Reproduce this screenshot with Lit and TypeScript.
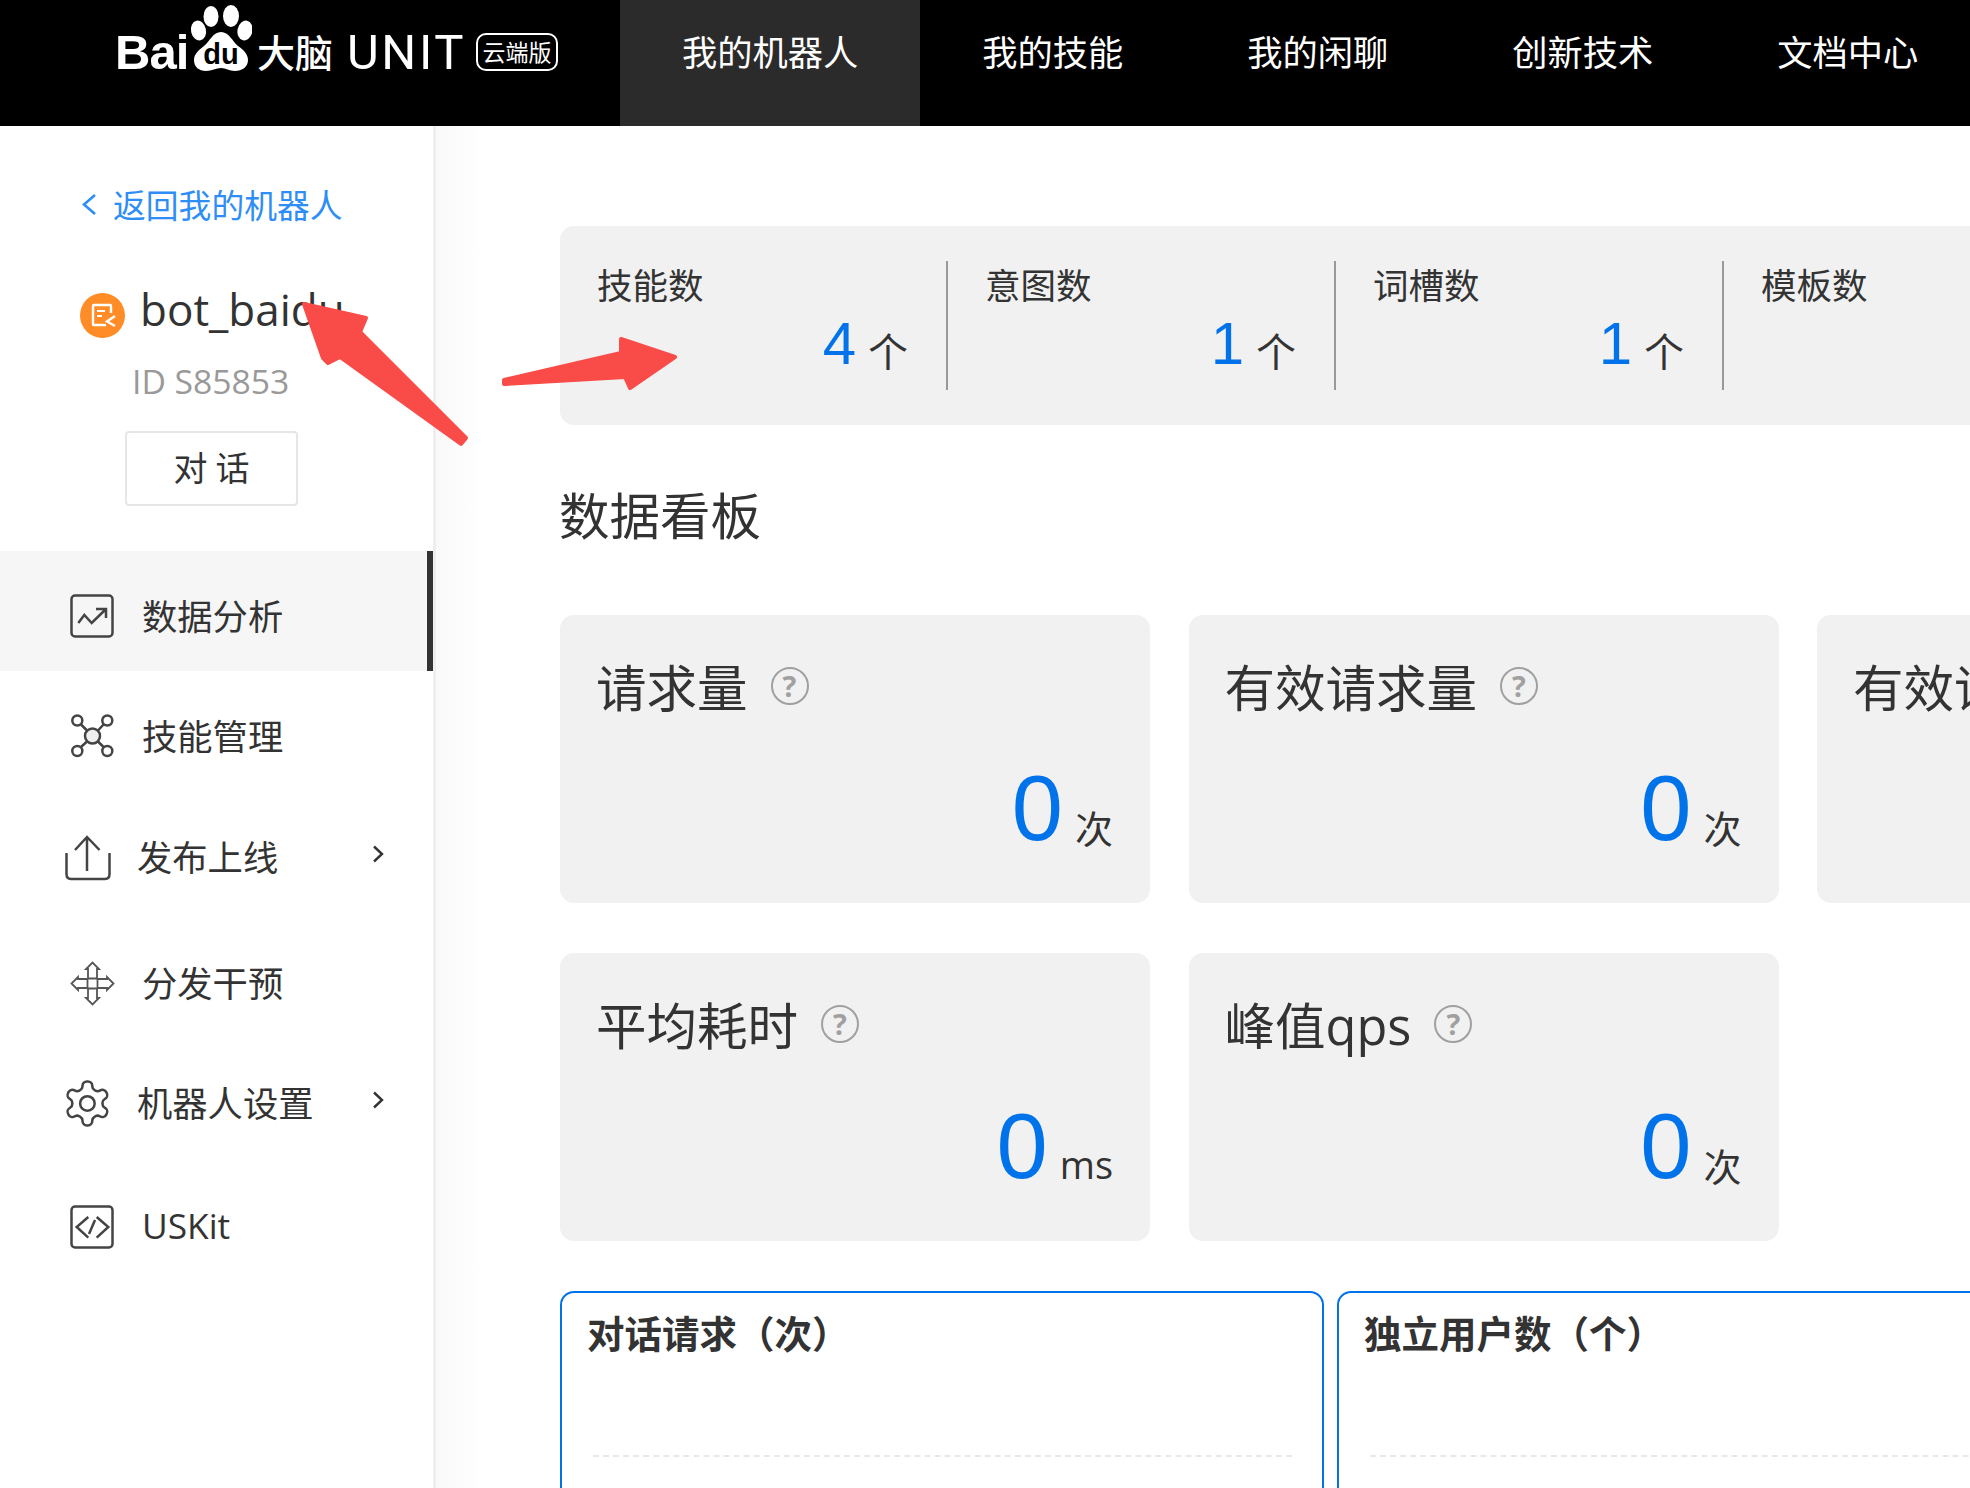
import { LitElement, html, css, svg, unsafeCSS } from "lit";
import { customElement } from "lit/decorators.js";

const FONT = unsafeCSS(`"Open Sans", "Noto Sans CJK SC", sans-serif`);

const chevron = html`<svg class="chev" viewBox="0 0 12 18" width="12" height="18" fill="none" stroke="#333" stroke-width="2.4"><path d="M2 1.5 L10 9 L2 16.5"/></svg>`;

const icons: Record<string, unknown> = {
  chart: svg`<rect x="1.5" y="1.5" width="41" height="41" rx="3.5"/><path d="M8.3 29 L14.3 21 L21.7 29 L36 15 M26 15 H36 V24"/>`,
  net: svg`<circle cx="22.5" cy="22" r="7.5" fill="#f0f0f0"/><circle cx="7.3" cy="6.5" r="5"/><circle cx="37.3" cy="6.5" r="5"/><circle cx="7.3" cy="37" r="5"/><circle cx="37.3" cy="37" r="5"/><path d="M11 10.5 L17 16.5 M33.5 10.5 L28 16.5 M11 33 L17 27.5 M33.5 33 L28 27.5"/>`,
  upload: svg`<path d="M22 2 V36 M10 15 L22 2 L34.5 15"/><path d="M1.5 18 V39 Q1.5 44 6 44 H40 Q44.5 44 44.5 39 V18"/>`,
  cross: svg`<g stroke-width="1.8" stroke="#555"><path d="M18 17.5 V8 H16 L22.5 1.5 L29 8 H27 V17.5 Z"/><path d="M18 27.5 V37 H16 L22.5 43.5 L29 37 H27 V27.5 Z"/><path d="M17.5 18 H8 V16 L1.5 22.5 L8 29 V27 H17.5 Z"/><path d="M27.5 18 H37 V16 L43.5 22.5 L37 29 V27 H27.5 Z"/></g>`,
  gear: svg`<g transform="translate(-4 -4) scale(2.2)" stroke-width="1.15"><path d="M12.22 2h-.44a2 2 0 0 0-2 2v.18a2 2 0 0 1-1 1.73l-.43.25a2 2 0 0 1-2 0l-.15-.08a2 2 0 0 0-2.73.73l-.22.38a2 2 0 0 0 .73 2.73l.15.1a2 2 0 0 1 1 1.72v.51a2 2 0 0 1-1 1.74l-.15.09a2 2 0 0 0-.73 2.73l.22.38a2 2 0 0 0 2.73.73l.15-.08a2 2 0 0 1 2 0l.43.25a2 2 0 0 1 1 1.73V20a2 2 0 0 0 2 2h.44a2 2 0 0 0 2-2v-.18a2 2 0 0 1 1-1.73l.43-.25a2 2 0 0 1 2 0l.15.08a2 2 0 0 0 2.73-.73l.22-.39a2 2 0 0 0-.73-2.73l-.15-.08a2 2 0 0 1-1-1.74v-.5a2 2 0 0 1 1-1.74l.15-.09a2 2 0 0 0 .73-2.73l-.22-.38a2 2 0 0 0-2.73-.73l-.15.08a2 2 0 0 1-2 0l-.43-.25a2 2 0 0 1-1-1.73V4a2 2 0 0 0-2-2z"/><circle cx="12" cy="12" r="3.3"/></g>`,
  code: svg`<rect x="1.5" y="1.5" width="41" height="41" rx="3.5"/><path d="M18.3 12 L6.7 22 L18.3 32.7 M26.7 12 L38.3 22 L26.7 32.7 M25 15 L19 29"/>`,
};

const menu = [
  { label: "数据分析", icon: "chart", active: true },
  { label: "技能管理", icon: "net" },
  { label: "发布上线", icon: "upload", sub: true },
  { label: "分发干预", icon: "cross" },
  { label: "机器人设置", icon: "gear", sub: true },
  { label: "USKit", icon: "code" },
];
const nav = ["我的机器人", "我的技能", "我的闲聊", "创新技术", "文档中心"];
const stats = [
  { t: "技能数", v: "4" },
  { t: "意图数", v: "1" },
  { t: "词槽数", v: "1" },
  { t: "模板数", v: "1" },
];
const cards = [
  { t: "请求量", v: "0", u: "次" },
  { t: "有效请求量", v: "0", u: "次" },
  { t: "有效请求占比", v: "0", u: "%" },
  { t: "平均耗时", v: "0", u: "ms", latin: true },
  { t: "峰值qps", v: "0", u: "次" },
];
const charts = ["对话请求（次）", "独立用户数（个）"];

@customElement("app-root")
export class AppRoot extends LitElement {
  static styles = css`
    :host { display: block; width: 1970px; height: 1488px; position: relative; overflow: hidden; background: #fff; font-family: ${FONT}; color: #333; }
    .header { display: flex; height: 126px; background: #000; color: #fff; }
    .logo { width: 620px; flex: none; display: flex; align-items: flex-start; padding: 0 0 0 115px; box-sizing: border-box; }
    .bai { font: 700 49px/1 "Liberation Sans", sans-serif; margin-top: 28px; letter-spacing: -1px; width: 73px; }
    .paw { position: relative; width: 64px; height: 72px; flex: none; }
    .paw svg { display: block; }
    .du { position: absolute; left: 8px; top: 40px; width: 50px; text-align: center; color: #000; font: 700 29px/1 "Liberation Sans", sans-serif; letter-spacing: 0; }
    .brain { font: 500 38px/1 "Noto Sans CJK SC", sans-serif; margin: 32px 0 0 5px; width: 76px; white-space: nowrap; }
    .unit { font: 400 49px/1 Roboto, sans-serif; margin: 28px 0 0 14px; letter-spacing: 2.6px; width: 116px; white-space: nowrap; }
    .edition { margin: 33px 0 0 13px; width: 82px; height: 38px; box-sizing: border-box; border: 2px solid #fff; border-radius: 10px; font: 400 23px/32px "Noto Sans CJK SC", sans-serif; text-align: center; white-space: nowrap; }
    .nav { display: flex; }
    .nav a { padding: 0 62px 25px; display: flex; align-items: center; font-size: 35.25px; white-space: nowrap; }
    .nav a.on { background: #2b2b2b; }

    .body { display: flex; height: 1362px; }
    .side { width: 436px; flex: none; box-sizing: border-box; border-right: 3px solid #eee; padding-top: 58px; }
    .back { display: flex; align-items: center; height: 40px; padding-left: 82px; color: #2e8ef5; font-size: 32.8px; white-space: nowrap; }
    .back svg { margin-right: 17px; }
    .bot { display: flex; align-items: center; height: 60px; padding-left: 80px; margin-top: 61px; }
    .bot-ic { width: 45px; height: 45px; flex: none; margin-right: 15px; }
    .bot-name { font-size: 44px; line-height: 60px; color: #333; margin-top: -12px; white-space: nowrap; }
    .bot-id { padding-left: 132px; font-size: 33.7px; line-height: 44px; color: #999; margin-top: 14px; }
    .talk { margin: 28px 0 0 125px; width: 173px; height: 75px; box-sizing: border-box; border: 2px solid #e6e6e6; border-radius: 4px; display: flex; align-items: center; justify-content: center; font-size: 34px; color: #333; letter-spacing: 8px; padding: 0 0 4px 8px; }
    .menu { margin-top: 45px; }
    .item { height: 120px; display: flex; align-items: center; padding: 10px 0 0 70px; font-size: 35.3px; box-sizing: border-box; position: relative; white-space: nowrap; }
    .item:nth-child(3) { margin-top: 1px; padding-left: 65px; }
    .item:nth-child(4) { margin-top: 6px; }
    .item:nth-child(5) { padding-left: 65px; }
    .item:nth-child(6) { margin-top: 4px; }
    .item.on { background: #f6f6f6; border-right: 6px solid #333; }
    .ic { flex: none; width: 45px; height: 45px; fill: none; stroke: #444; stroke-width: 2.5; overflow: visible; }
    .item span { margin: -4px 0 0 27px; }
    .chev { position: absolute; left: 372px; top: 53px; }

    .main { flex: 1; min-width: 0; padding: 100px 0 0 124px; background: linear-gradient(to right, #f9f9f9, #fff 50px); }
    .panel { display: flex; width: 1600px; height: 199px; box-sizing: border-box; padding: 35px 0; background: #f1f1f1; border-radius: 14px; }
    .cell { width: 388px; flex: none; box-sizing: border-box; padding: 0 38px 0 37px; border-right: 2px solid #999; display: flex; flex-direction: column; }
    .cell .t { font-size: 35.5px; line-height: 48px; }
    .cell .val { display: flex; justify-content: flex-end; align-items: baseline; }
    .num { font-family: "Liberation Sans", sans-serif; color: #0073eb; }
    .cell .num { font-size: 60px; line-height: 70px; }
    .cell .u { font-size: 40px; margin-left: 12px; transform: translateY(2.5px); }
    h2 { font-size: 50.5px; font-weight: 400; line-height: 70px; margin: 56px 0 0 -1px; }
    .grid { display: grid; grid-template-columns: repeat(3, 590px); gap: 50px 38.5px; margin-top: 64px; width: 1900px; }
    .card { height: 288px; background: #f1f1f1; border-radius: 14px; padding: 37px 37px 0 36px; box-sizing: border-box; }
    .card .t { display: flex; align-items: center; font-size: 50.5px; line-height: 72px; white-space: nowrap; }
    .help { width: 38px; height: 38px; box-sizing: border-box; border: 2px solid #a0a0a0; border-radius: 50%; color: #a0a0a0; font: 700 29px/33px "Open Sans", sans-serif; text-align: center; margin: -4px 0 0 23px; flex: none; }
    .card .val { display: flex; justify-content: flex-end; align-items: baseline; margin-top: 29px; }
    .card .num { font-size: 92px; line-height: 110px; }
    .card .u { font-size: 38px; margin-left: 12px; transform: translateY(3px); }
    .card .u.latin { transform: translateY(1px); }
    .charts { display: flex; gap: 13px; margin-top: 50px; width: 1700px; }
    .chart { width: 764px; height: 260px; flex: none; box-sizing: border-box; border: 2px solid #0073eb; border-radius: 14px 14px 0 0; padding: 18px 25px 0; }
    .chart b { display: block; font-size: 37.5px; line-height: 46px; font-weight: 700; white-space: nowrap; }
    .dash { height: 0; margin: 98px 5px 0 6px; border-top: 2px dashed #e8e8e8; }
    .arrows { position: absolute; inset: 0; width: 1970px; height: 1488px; pointer-events: none; }
  `;

  render() {
    return html`
      <div class="header">
        <div class="logo">
          <div class="bai">Bai</div>
          <div class="paw">
            <svg viewBox="0 0 64 72" width="64" height="72" fill="#fff">
              <ellipse cx="23" cy="16.5" rx="7.5" ry="10.5"/>
              <ellipse cx="43" cy="16" rx="8" ry="11"/>
              <ellipse cx="10.5" cy="30.5" rx="7.5" ry="10" transform="rotate(-12 10.5 30.5)"/>
              <ellipse cx="57" cy="30.5" rx="7.5" ry="10" transform="rotate(12 57 30.5)"/>
              <path d="M33 32 C41 32 44 41 50 46 C57 51 60 55 60 60 C60 67 54 71 47 71 C41 71 38 68 33 68 C28 68 24 71 18 71 C11 71 6 67 6 60 C6 54 11 50 16 46 C22 41 25 32 33 32 Z"/>
            </svg>
            <div class="du">du</div>
          </div>
          <div class="brain">大脑</div>
          <div class="unit">UNIT</div>
          <div class="edition">云端版</div>
        </div>
        <div class="nav">${nav.map((n, i) => html`<a class=${i === 0 ? "on" : ""}>${n}</a>`)}</div>
      </div>
      <div class="body">
        <div class="side">
          <div class="back">
            <svg viewBox="0 0 14 21" width="14" height="21" fill="none" stroke="#2e8ef5" stroke-width="2.6"><path d="M13 1 L2 10.5 L13 20"/></svg>
            返回我的机器人
          </div>
          <div class="bot">
            <svg class="bot-ic" viewBox="0 0 45 45">
              <circle cx="22.5" cy="22.5" r="22.5" fill="#ff8c26"/>
              <path d="M31 20 V13 Q31 12 30 12 H14 Q13 12 13 13 V31 Q13 32 14 32 H26" fill="none" stroke="#fff" stroke-width="2.4"/>
              <path d="M17 18 H25 M17 23 H22" stroke="#fff" stroke-width="2.2"/>
              <path d="M35 23 L27 28.5 L35 33" fill="none" stroke="#fff" stroke-width="2.4"/>
            </svg>
            <div class="bot-name">bot_baidu</div>
          </div>
          <div class="bot-id">ID S85853</div>
          <div class="talk">对话</div>
          <div class="menu">
            ${menu.map((m) => html`
              <div class="item ${m.active ? "on" : ""}">
                <svg class="ic" viewBox="0 0 45 45">${icons[m.icon]}</svg>
                <span>${m.label}</span>
                ${m.sub ? chevron : ""}
              </div>`)}
          </div>
        </div>
        <div class="main">
          <div class="panel">
            ${stats.map((s) => html`
              <div class="cell">
                <div class="t">${s.t}</div>
                <div class="val"><span class="num">${s.v}</span><span class="u">个</span></div>
              </div>`)}
          </div>
          <h2>数据看板</h2>
          <div class="grid">
            ${cards.map((c) => html`
              <div class="card">
                <div class="t">${c.t}<div class="help">?</div></div>
                <div class="val"><span class="num">${c.v}</span><span class="u ${c.latin ? "latin" : ""}">${c.u}</span></div>
              </div>`)}
          </div>
          <div class="charts">
            ${charts.map((c) => html`
              <div class="chart"><b>${c}</b><div class="dash"></div></div>`)}
          </div>
        </div>
      </div>
      <svg class="arrows" viewBox="0 0 1970 1488" fill="#f94b48" stroke="#f94b48" stroke-width="4" stroke-linejoin="round">
        <polygon points="304,304 366,318 360,332 466,438 461,444 340,357 328,363 323,358"/>
        <polygon points="504,380 621,353 621,339 675,357 630,388 625,377 504,384"/>
      </svg>
    `;
  }
}
